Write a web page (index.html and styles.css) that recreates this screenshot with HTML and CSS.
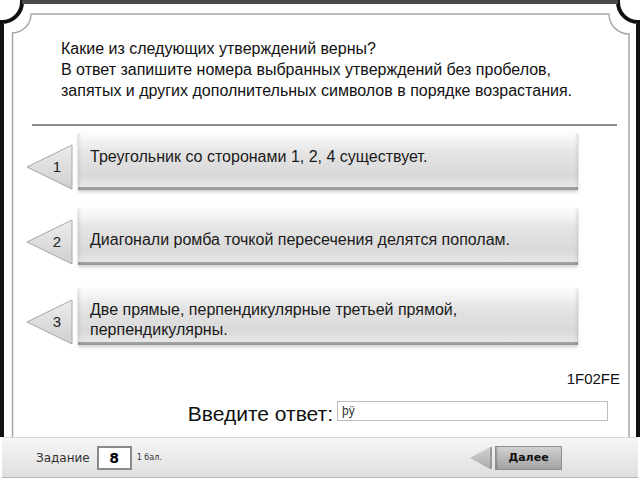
FILE: index.html
```html
<!DOCTYPE html>
<html lang="ru">
<head>
    <meta charset="UTF-8">
    <title>Задание 8</title>
    <link rel="stylesheet" href="styles.css">
</head>
<body>
<div class="screen">
    <!-- decorative frame with scooped corners -->
    <svg class="frame" width="640" height="437" viewBox="0 0 640 437">
        <path d="M2,437 L2,22 A20,20 0 0 0 22,2 L618,2 A20,20 0 0 0 638,22 L638,437" fill="none" stroke="#111" stroke-width="4"/>
        <path d="M22,2 L618,2" stroke="#4a4a4a" stroke-width="4"/>
        <path d="M12.5,437 L12.5,33 A19,19 0 0 0 31,14 L609,14 A20,20 0 0 0 629,34 L629,437" fill="none" stroke="#a8a8a8" stroke-width="1.5"/>
    </svg>

    <div class="main">
        <p class="question">Какие из следующих утверждений верны?<br>В ответ запишите номера выбранных утверждений без пробелов,<br>запятых и других дополнительных символов в порядке возрастания.</p>
        <div class="rule"></div>

        <div class="options">
            <div class="option">
                <svg class="marker" width="48" height="46" viewBox="0 0 48 46">
                    <defs>
                        <linearGradient id="tri" x1="0" y1="0" x2="0" y2="1">
                            <stop offset="0" stop-color="#ececec"/>
                            <stop offset="1" stop-color="#cfcfcf"/>
                        </linearGradient>
                    </defs>
                    <polygon points="1,23 46,1 46,45" fill="url(#tri)" stroke="#a6a6a6"/>
                    <text x="31" y="28" class="marker-num">1</text>
                </svg>
                <div class="card card-first">Треугольник со сторонами 1, 2, 4 существует.</div>
            </div>
            <div class="option">
                <svg class="marker" width="48" height="46" viewBox="0 0 48 46">
                    <polygon points="1,23 46,1 46,45" fill="url(#tri)" stroke="#a6a6a6"/>
                    <text x="31" y="28" class="marker-num">2</text>
                </svg>
                <div class="card card-second">Диагонали ромба точкой пересечения делятся пополам.</div>
            </div>
            <div class="option">
                <svg class="marker" width="48" height="46" viewBox="0 0 48 46">
                    <polygon points="1,23 46,1 46,45" fill="url(#tri)" stroke="#a6a6a6"/>
                    <text x="31" y="28" class="marker-num">3</text>
                </svg>
                <div class="card card-third">Две прямые, перпендикулярные третьей прямой,<br>перпендикулярны.</div>
            </div>
        </div>

        <div class="code">1F02FE</div>

        <div class="answer">
            <span class="answer-label">Введите ответ:</span>
            <div class="answer-input">þÿ</div>
        </div>
    </div>

    <div class="footer">
        <span class="task-label">Задание</span>
        <div class="task-num">8</div>
        <span class="task-score">1 бал.</span>
        <div class="spacer"></div>
        <svg class="back" width="24" height="24" viewBox="0 0 24 24">
            <defs>
                <linearGradient id="back" x1="0" y1="0" x2="0" y2="1">
                    <stop offset="0" stop-color="#d4d4d4"/>
                    <stop offset="1" stop-color="#a9a9a9"/>
                </linearGradient>
            </defs>
            <polygon points="1,12 21,1 21,23" fill="url(#back)"/>
            <rect x="21" y="1" width="2" height="22" fill="#9a9a9a"/>
        </svg>
        <button class="next">Далее</button>
    </div>
</div>
</body>
</html>
```

FILE: styles.css
```css
body {
    margin: 0;
    background: #fff;
    font-family: "Liberation Sans", Arial, sans-serif;
    color: #111;
}
.screen {
    position: relative;
    width: 640px;
    height: 480px;
    overflow: hidden;
}
.frame {
    position: absolute;
    left: 0;
    top: 0;
}
.main {
    height: 437px;
    padding-top: 38px;
    box-sizing: border-box;
}
.question {
    margin: 0 0 0 61px;
    font-size: 16px;
    line-height: 21px;
}
.rule {
    margin: 23px 0 0 32px;
    width: 585px;
    height: 2px;
    background: #8c8c8c;
}
.options {
    margin-top: 7px;
    padding-left: 26px;
}
.option {
    display: flex;
    align-items: flex-end;
    gap: 4px;
    margin-bottom: 18px;
}
.option:nth-child(2) {
    margin-bottom: 23px;
}
.marker {
    flex: none;
}
.marker-num {
    font-family: "Liberation Sans", Arial, sans-serif;
    font-size: 15px;
    fill: #222;
    text-anchor: middle;
}
.card {
    width: 500px;
    height: 57px;
    box-sizing: border-box;
    padding: 14px 12px 0;
    font-size: 16px;
    line-height: 20px;
    color: #1a1a1a;
    background: linear-gradient(#fcfcfc, #e4e4e4 35%, #d9d9d9 75%, #e6e6e6 94%, #a2a2a2 94%, #9c9c9c);
    box-shadow: inset 3px 0 3px -2px rgba(0, 0, 0, 0.12), inset -3px 0 3px -2px rgba(0, 0, 0, 0.12), 0 2px 3px rgba(0, 0, 0, 0.2);
}
.card-second {
    padding-top: 22px;
}
.card-third {
    padding-top: 12px;
}
.code {
    margin-top: 25px;
    padding-right: 20px;
    text-align: right;
    font-size: 15px;
    line-height: 18px;
}
.answer {
    margin-top: 13px;
    display: flex;
    justify-content: flex-end;
    align-items: flex-start;
    gap: 4px;
    padding-right: 32px;
}
.answer-label {
    font-size: 21px;
    line-height: 22px;
    padding-top: 2px;
}
.answer-input {
    width: 271px;
    height: 20px;
    box-sizing: border-box;
    border: 1px solid #bdbdbd;
    padding: 1px 4px;
    font-size: 12px;
    line-height: 16px;
    color: #333;
}
.footer {
    height: 41px;
    margin: 0 2px;
    box-sizing: border-box;
    display: flex;
    align-items: center;
    padding: 0 76px 0 34px;
    border-top: 1px solid #d8d8d8;
    border-bottom: 1px solid #b4b4b4;
    background: linear-gradient(#f6f6f6, #ebebeb 50%, #dedede);
    font-family: "DejaVu Sans", sans-serif;
    color: #333;
}
.task-label {
    font-size: 12px;
}
.task-num {
    margin-left: 7px;
    width: 35px;
    height: 24px;
    box-sizing: border-box;
    border: 2px solid #8a8a8a;
    background: #fff;
    text-align: center;
    font-weight: bold;
    font-size: 14px;
    line-height: 20px;
    color: #000;
}
.task-score {
    margin-left: 5px;
    font-size: 8px;
}
.spacer {
    flex: 1;
}
.back {
    margin-right: 2px;
}
.next {
    width: 67px;
    height: 24px;
    padding: 0;
    border: 1px solid #8e8e8e;
    background: linear-gradient(#d2d2d2, #b4b4b4 60%, #a4a4a4);
    box-shadow: inset 2px 0 2px -1px rgba(0, 0, 0, 0.25);
    font-family: "DejaVu Sans", sans-serif;
    font-weight: bold;
    font-size: 11px;
    color: #111;
}
```
